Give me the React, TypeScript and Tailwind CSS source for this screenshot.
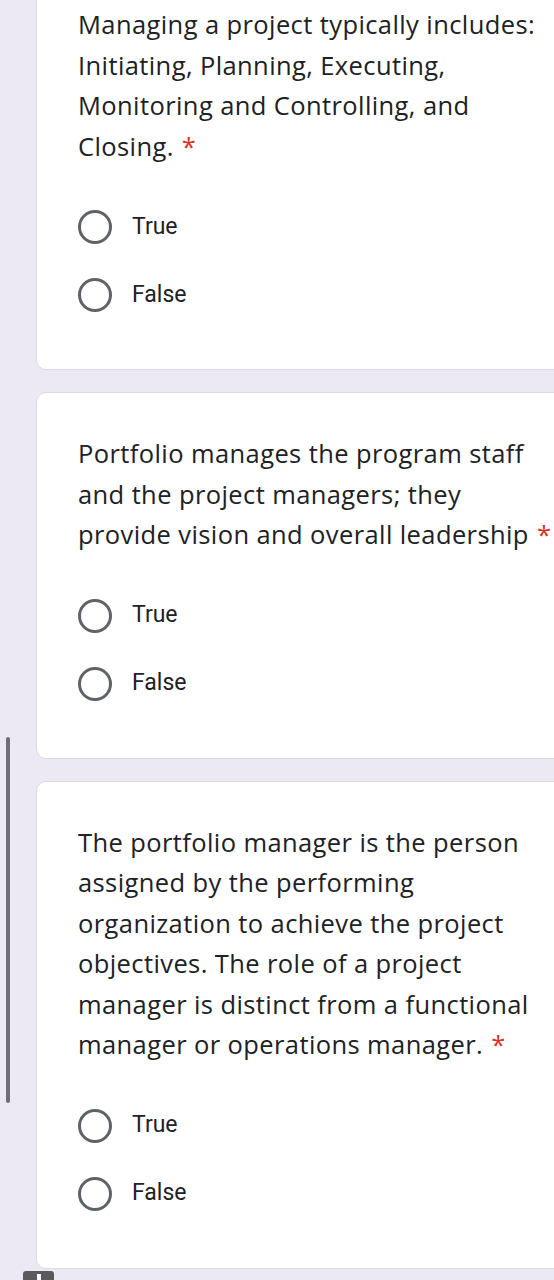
import React from "react";

function Radio({ label }: { label: string }) {
  return (
    <div className="flex h-[68px] items-center">
      <div className="ml-[41px] h-[34px] w-[34px] rounded-full border-[3px] border-[#5f6368]" />
      <span
        className="ml-[20px] text-[23px] text-[#202124]"
        style={{ fontFamily: "Roboto, sans-serif" }}
      >
        {label}
      </span>
    </div>
  );
}

function Card({
  lines,
  first,
}: {
  lines: string[];
  first?: boolean;
}) {
  return (
    <div
      className={
        "ml-[36px] -mr-[20px] rounded-[10px] border border-[#dadce0] bg-white pb-[40px] " +
        (first ? "-mt-[38px] pt-[41px]" : "pt-[40px]")
      }
    >
      <div
        className="pl-[41px] pr-[20px] text-[25.5px] leading-[40.5px] tracking-[0.4px] text-[#202124]"
        style={{ fontFamily: "'Open Sans', Roboto, sans-serif" }}
      >
        {lines.map((l, i) => (
          <div key={i} className="whitespace-nowrap">
            {l}
            {i === lines.length - 1 && (
              <span className="ml-[8px] text-[#d93025]">*</span>
            )}
          </div>
        ))}
      </div>
      <div className="mt-[27px]">
        <Radio label="True" />
        <Radio label="False" />
      </div>
    </div>
  );
}

export default function App() {
  return (
    <div className="relative h-[1280px] w-[554px] overflow-hidden bg-[#ece9f5]">
      <div className="flex flex-col gap-[22px]">
        <Card
          first
          lines={[
            "Managing a project typically includes:",
            "Initiating, Planning, Executing,",
            "Monitoring and Controlling, and",
            "Closing.",
          ]}
        />
        <Card
          lines={[
            "Portfolio manages the program staff",
            "and the project managers; they",
            "provide vision and overall leadership",
          ]}
        />
        <Card
          lines={[
            "The portfolio manager is the person",
            "assigned by the performing",
            "organization to achieve the project",
            "objectives. The role of a project",
            "manager is distinct from a functional",
            "manager or operations manager.",
          ]}
        />
      </div>
      <div className="absolute left-[6px] top-[737px] h-[366px] w-[4px] rounded-full bg-[#6e6c78]" />
      <div className="absolute left-[23px] top-[1271px] h-[14px] w-[31px] rounded-t-[3px] bg-[#5a5a5e]">
        <div className="mx-auto mt-[3px] h-[6px] w-[4px] bg-white" />
      </div>
    </div>
  );
}
